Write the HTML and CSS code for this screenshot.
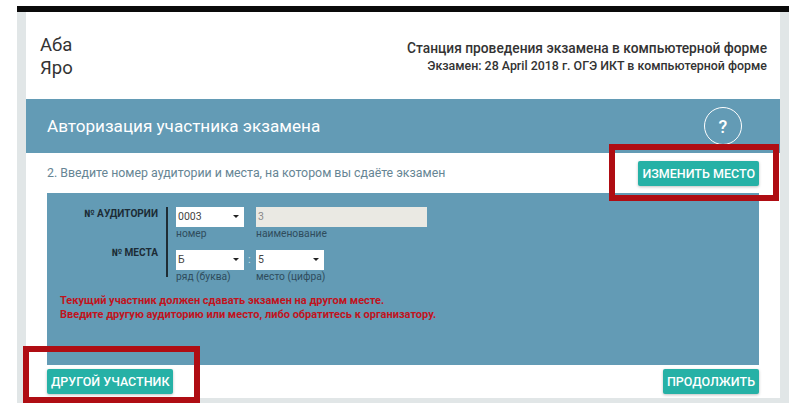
FILE: index.html
```html
<!doctype html>
<html lang="ru">

<head>
  <meta charset="UTF-8" />
  <title>Авторизация участника экзамена</title>
  <link rel="stylesheet" href="styles.css">
</head>

<body>
  <div class="frame">
    <div class="card">
      <header class="header">
        <div class="person">
          <div>Аба</div>
          <div>Яро</div>
        </div>
        <div class="station">
          <div class="station-title">Станция проведения экзамена в компьютерной форме</div>
          <div class="station-exam">Экзамен: 28 April 2018 г. ОГЭ ИКТ в компьютерной форме</div>
        </div>
      </header>

      <div class="banner">
        <div class="banner-title">Авторизация участника экзамена</div>
        <div class="help">?</div>
      </div>

      <div class="step">
        <div class="step-text">2. Введите номер аудитории и места, на котором вы сдаёте экзамен</div>
        <button class="btn">ИЗМЕНИТЬ МЕСТО</button>
      </div>

      <div class="panel">
        <div class="form">
          <div class="labels">
            <div class="label">№ АУДИТОРИИ</div>
            <div class="label">№ МЕСТА</div>
          </div>
          <div class="fields">
            <div class="field-row">
              <div class="field">
                <div class="select">0003</div>
                <div class="caption">номер</div>
              </div>
              <div class="field field-name">
                <div class="readonly">3</div>
                <div class="caption">наименование</div>
              </div>
            </div>
            <div class="field-row">
              <div class="field">
                <div class="select">Б</div>
                <div class="caption">ряд (буква)</div>
              </div>
              <div class="field field-seat">
                <div class="select">5</div>
                <div class="caption">место (цифра)</div>
              </div>
              <div class="colon">:</div>
            </div>
          </div>
        </div>
        <div class="error">
          <div>Текущий участник должен сдавать экзамен на другом месте.</div>
          <div>Введите другую аудиторию или место, либо обратитесь к организатору.</div>
        </div>
      </div>

      <div class="actions">
        <button class="btn">ДРУГОЙ УЧАСТНИК</button>
        <button class="btn">ПРОДОЛЖИТЬ</button>
      </div>
    </div>
  </div>

  <div class="mark mark-top"></div>
  <div class="mark mark-bottom"></div>
</body>

</html>
```

FILE: styles.css
```css
* {
  margin: 0;
  padding: 0;
  box-sizing: border-box;
  font-family: Roboto, "Liberation Sans", sans-serif;
}

body {
  background-color: #ffffff;
  width: 805px;
  height: 420px;
  overflow: hidden;
  position: relative;
}

.frame {
  width: 772px;
  height: 397px;
  margin: 6px 0 0 17px;
  border-top: 6px solid #0a0a0a;
  background-color: #e1e6e7;
  padding: 0 9px 5px;
}

.card {
  height: 386px;
  background-color: #ffffff;
  display: flex;
  flex-direction: column;
}

.header {
  height: 87px;
  display: flex;
  justify-content: space-between;
  align-items: center;
  padding: 0 13px 0 14px;
}

.person {
  font-size: 18.5px;
  line-height: 23.5px;
  color: #333333;
  margin-top: 3px;
}

.station {
  text-align: right;
  color: #333333;
  font-weight: 500;
  margin-top: 2px;
}

.station-title {
  font-size: 13.75px;
  line-height: 17px;
}

.station-exam {
  font-size: 12.4px;
  line-height: 17px;
}

.banner {
  height: 54px;
  background-color: #639bb5;
  display: flex;
  justify-content: space-between;
  align-items: center;
  padding: 0 38px 0 21px;
}

.banner-title {
  font-size: 17.1px;
  color: #ffffff;
}

.help {
  width: 38px;
  height: 38px;
  border: 1px solid #ffffff;
  border-radius: 50%;
  color: #ffffff;
  font-size: 18px;
  font-weight: 500;
  display: flex;
  align-items: center;
  justify-content: center;
}

.step {
  height: 40px;
  display: flex;
  justify-content: space-between;
  align-items: center;
  padding: 0 21px;
}

.step-text {
  font-size: 12.35px;
  color: #668594;
}

.btn {
  height: 25px;
  padding: 0 4px;
  border: none;
  border-radius: 2px;
  background-color: #26b1a6;
  color: #ffffff;
  font-size: 12.5px;
  font-weight: 500;
  box-shadow: 0 1px 3px rgba(0, 0, 0, 0.25);
}

.panel {
  height: 172px;
  margin: 0 21px;
  background-color: #639bb5;
  padding-top: 14px;
}

.form {
  display: flex;
}

.labels {
  width: 121px;
  height: 70px;
  border-right: 2px solid #1f2d35;
  padding-right: 8px;
  text-align: right;
  display: flex;
  flex-direction: column;
  gap: 26px;
}

.label {
  font-size: 10.1px;
  font-weight: 700;
  line-height: 13px;
  color: #1c2c36;
}

.fields {
  margin-left: 8px;
  display: flex;
  flex-direction: column;
  gap: 9px;
}

.field-row {
  display: flex;
  gap: 12px;
  position: relative;
}

.select,
.readonly {
  height: 20px;
  padding-left: 2px;
  font-size: 10.5px;
  line-height: 20px;
}

.select {
  width: 68px;
  background-color: #ffffff;
  color: #444444;
  position: relative;
}

.select::after {
  content: "";
  position: absolute;
  right: 5px;
  top: 8px;
  border-left: 3.5px solid transparent;
  border-right: 3.5px solid transparent;
  border-top: 3.5px solid #222222;
}

.readonly {
  width: 171px;
  background-color: #eae9e3;
  color: #8a8a8a;
}

.caption {
  font-size: 10.25px;
  line-height: 14px;
  color: #2f4c5c;
}

.colon {
  position: absolute;
  left: 72px;
  top: 3px;
  font-size: 11px;
  color: #d5e3ea;
}

.error {
  margin: 10px 0 0 13px;
  font-size: 11px;
  font-weight: 700;
  line-height: 13.5px;
  color: #c0141e;
}

.actions {
  display: flex;
  justify-content: space-between;
  padding: 4px 21px 0;
}

.mark {
  position: absolute;
  border: 6px solid #af0d13;
}

.mark-top {
  left: 609px;
  top: 144px;
  width: 170px;
  height: 57px;
}

.mark-bottom {
  left: 23px;
  top: 346px;
  width: 177px;
  height: 57px;
}
```
